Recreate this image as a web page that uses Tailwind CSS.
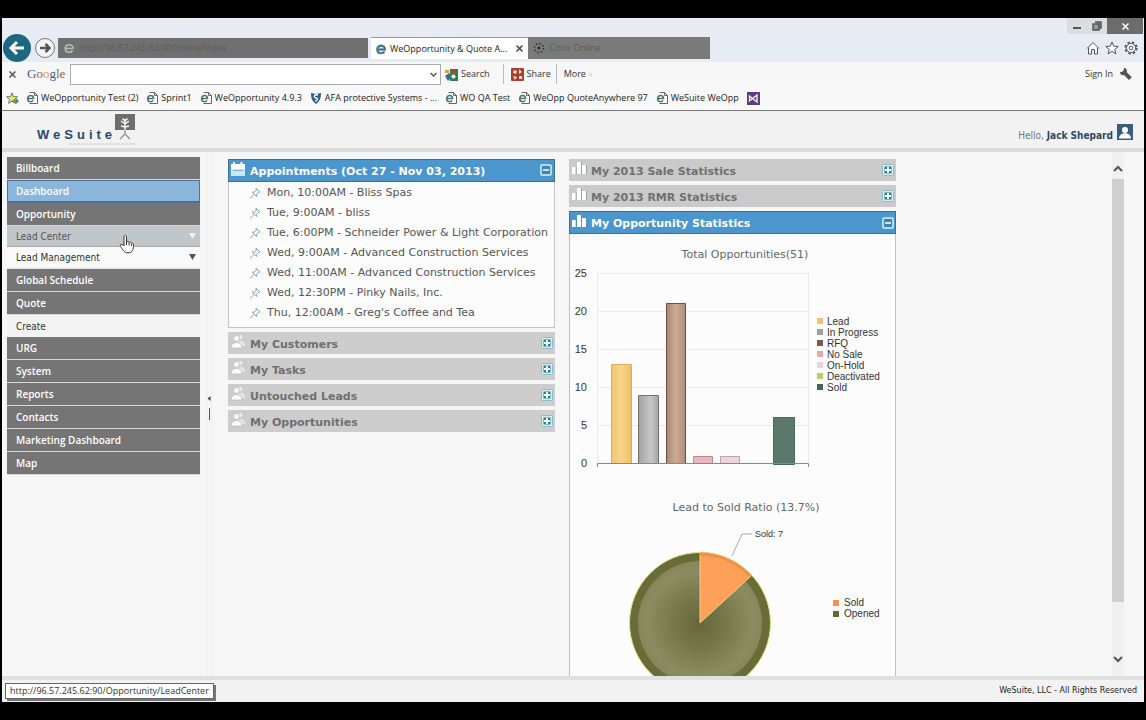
<!DOCTYPE html>
<html lang="en">
<head>
    <meta charset="UTF-8">
    <meta name="viewport" content="width=device-width, initial-scale=1.0">
    <title>WeOpportunity &amp; Quote Anywhere</title>
    <script src="https://cdn.jsdelivr.net/npm/@tailwindcss/browser@4"></script>
</head>
<body class="h-screen overflow-hidden bg-black">
    <!-- Shared icons -->
    <svg class="hidden">
        <symbol id="ie" viewBox="0 0 12 12"><path d="M3.500.5h5l3 3v8h-8" fill="#fff" stroke="#666"/><path d="M8.500.5v3h3" fill="none" stroke="#666"/><path d="M1.500 6.500h6c0-4-5.500-4-5.800 0-.2 3.800 4.300 4 5.300 1.700" fill="none" stroke="#4b7377" stroke-width="1.500"/></symbol>
        <symbol id="pin" viewBox="0 0 12 12"><path d="M7 1l4 4-1.500.3-2 2 .2 2.200-4.500-4.500 2.300.2 1.700-2zM5 7.500L1 11.300" fill="#fff" stroke="#84a9b5"/></symbol>
        <symbol id="people" viewBox="0 0 16 16"><circle cx="10.500" cy="4" r="3" fill="#e4e9e9" stroke="#b2bcbc" stroke-width=".7"/><path d="M7 13c0-7 8-7 8 0z" fill="#dfe6e6"/><circle cx="6.500" cy="5.500" r="3" fill="#f8fafa" stroke="#b2bcbc" stroke-width=".7"/><path d="M1 15c0-7.500 11-7.500 11 0z" fill="#fafcfc" stroke="#b2bcbc" stroke-width=".7"/></symbol>
        <symbol id="bars" viewBox="0 0 16 14"><path d="M1 6h4v7H1zM6 1h4v12H6zM11 4h4v9h-4z" fill="#fff"/><path d="M5 6v7M10.500 1v12M15.500 4v9" stroke="#5f8da3" stroke-width=".6"/></symbol>
        <symbol id="plus" viewBox="0 0 12 12"><rect x=".5" y=".5" width="11" height="11" rx="1" fill="#d6f1f6" stroke="#8abdca"/><path d="M2.500 2.500h7v7h-7z" fill="#2c7b90"/><path d="M6 3v6M3 6h6" stroke="#fff" stroke-width="2"/></symbol>
        <symbol id="minus" viewBox="0 0 12 12"><rect x="1" y="1" width="10" height="10" rx="1" fill="#3c86b0" stroke="#d9f3fa" stroke-width="1.500"/><path d="M3 6h6" stroke="#fff" stroke-width="1.500"/></symbol>
    </svg>

    <div class="flex flex-col h-full px-[2px] py-[18px]">
        <!-- Title bar -->
        <div class="flex justify-end h-4 bg-[#e9ecf2] pr-px">
            <button aria-label="Minimize" class="flex items-center justify-center w-5 bg-[#dcdddf]"><svg class="w-2 h-2" viewBox="0 0 8 8"><path d="M0 6h8" stroke="#555" stroke-width="2"/></svg></button>
            <button aria-label="Restore" class="flex items-center justify-center w-5 bg-[#dcdddf]"><svg class="w-[10px] h-[10px]" viewBox="0 0 10 10"><path d="M3 1h6v6H7M1 3h6v6H1z" fill="#999" stroke="#555" stroke-width="1.500"/></svg></button>
            <button aria-label="Close" class="flex items-center justify-center w-9 bg-[#6c6c6c]"><svg class="w-[7px] h-[7px]" viewBox="0 0 7 7"><path d="M.5.5l6 6m0-6l-6 6" stroke="#fff" stroke-width="1.500"/></svg></button>
        </div>

        <!-- Address bar and tabs -->
        <div class="flex items-center h-7 bg-[#e6ebf4] font-['Open_Sans',sans-serif] text-[9px] text-[#222]">
            <button aria-label="Back" class="w-7 h-7 shrink-0 ml-px"><svg viewBox="0 0 28 28"><circle cx="14" cy="14" r="14" fill="#1d6783"/><path d="M21 14H8.500M14 8l-6 6 6 6" fill="none" stroke="#fff" stroke-width="3"/></svg></button>
            <button aria-label="Forward" class="w-5 h-5 shrink-0 ml-1"><svg viewBox="0 0 20 20"><circle cx="10" cy="10" r="9.500" fill="#f3f5f8" stroke="#777"/><path d="M5 10h9M10.500 6l4 4-4 4" fill="none" stroke="#555" stroke-width="2.500"/></svg></button>
            <div class="flex items-center w-[310px] h-5 ml-[3px] pl-[5px] bg-[#707070]">
                <svg class="w-3 h-3 shrink-0" viewBox="0 0 12 12"><path d="M2 6.500h8c0-5-7.500-5-7.800 0-.2 4.500 5.500 4.800 7.300 2" fill="none" stroke="#aebfc4" stroke-width="1.500"/></svg>
                <input aria-label="Address" value="http://96.57.245.62:90/Home/Index" class="flex-1 min-w-0 ml-1 text-[#5c5c5c] outline-none">
            </div>
            <div class="flex items-center w-[157px] h-[22px] ml-[3px] pl-1 pr-[5px] bg-white border-t border-[#999]">
                <svg class="w-3 h-3 shrink-0" viewBox="0 0 12 12"><circle cx="6" cy="6" r="5" fill="#cfe0e6"/><path d="M2 6.500h8c0-5-7.500-5-7.800 0-.2 4.500 5.500 4.800 7.300 2" fill="none" stroke="#3f7285" stroke-width="1.800"/></svg>
                <span class="flex-1 min-w-0 ml-[3px] whitespace-nowrap">WeOpportunity &amp; Quote A...</span>
                <button aria-label="Close tab"><svg class="w-[7px] h-[7px]" viewBox="0 0 7 7"><path d="M.5.5l6 6m0-6l-6 6" stroke="#444" stroke-width="1.500"/></svg></button>
            </div>
            <div class="flex items-center w-[182px] h-[22px] pl-[5px] bg-[#7a7a7a] text-[#5d5d5d]">
                <svg class="w-3 h-3" viewBox="0 0 12 12"><circle cx="6" cy="6" r="4.500" fill="none" stroke="#333" stroke-width="1.500" stroke-dasharray="1.500 2"/><circle cx="6" cy="6" r="1.300" fill="#222"/></svg>
                <span class="ml-1">Citrix Online</span>
            </div>
            <div class="flex gap-[5px] ml-auto pr-[6px] text-[#555]">
                <button aria-label="Home"><svg class="w-[14px] h-[14px]" viewBox="0 0 14 14" fill="#fff" stroke="currentColor"><path d="M2.500 6.500v6.500h3V8.500h3V13h3V6.500M1 7.500l6-6 6 6"/></svg></button>
                <button aria-label="Favorites"><svg class="w-[14px] h-[14px]" viewBox="0 0 14 14" fill="#fff" stroke="currentColor"><path d="M7 1l1.700 4.200 4.500.3-3.500 2.900 1.200 4.400L7 10.400l-3.900 2.400 1.200-4.400L.8 5.500l4.500-.3z"/></svg></button>
                <button aria-label="Tools"><svg class="w-[14px] h-[14px]" viewBox="0 0 14 14" fill="none" stroke="currentColor"><circle cx="7" cy="7" r="5.700" stroke-width="1.800" stroke-dasharray="2.500 2"/><circle cx="7" cy="7" r="4.500" fill="#fff"/><circle cx="7" cy="7" r="1.800"/></svg></button>
            </div>
        </div>

        <!-- Google toolbar -->
        <div class="flex items-center h-6 bg-[#f7f7f8] font-['Open_Sans',sans-serif] text-[9px] text-[#333]">
            <button aria-label="Close toolbar" class="ml-[7px]"><svg class="w-[7px] h-[7px]" viewBox="0 0 7 7"><path d="M.5.5l6 6m0-6l-6 6" stroke="#555" stroke-width="1.500"/></svg></button>
            <span class="w-[43px] shrink-0 ml-[11px] font-['Liberation_Serif',serif] text-[13px]"><span class="text-[#3c5da8]">G</span><span class="text-[#b8503f]">o</span><span class="text-[#e0a23c]">o</span><span class="text-[#3c5da8]">g</span><span class="text-[#4e8a50]">l</span><span class="text-[#b8503f]">e</span></span>
            <div class="flex items-center w-[371px] h-[21px] bg-white border border-[#a9abb0]">
                <input aria-label="Search" class="flex-1 min-w-0 h-full px-1 outline-none">
                <svg class="w-[7px] h-[7px] mr-[3px]" viewBox="0 0 7 7"><path d="M.5 2l3 3 3-3" fill="none" stroke="#555" stroke-width="1.500"/></svg>
            </div>
            <button class="flex items-center gap-[3px] ml-1"><svg class="w-[13px] h-[13px]" viewBox="0 0 13 13"><path d="M5 1h8v12H5z" fill="#308044"/><path d="M0 2h4v3H0z" fill="#d2a23b"/><path d="M0 8l4-3 3 4-4 4z" fill="#366c9b"/><path d="M7 2h4v4H7z" fill="#b93e31"/><path d="M6 8l3-2 2 3-3 2z" fill="#eee"/></svg>Search</button>
            <button class="flex items-center gap-[3px] h-5 ml-[13px] pl-[7px] border-l border-[#bbb]"><svg class="w-[13px] h-[13px]" viewBox="0 0 13 13"><rect width="13" height="13" rx="1" fill="#a8402f"/><path d="M3 2l3 1-1 3-3-1zM8 1l3 3-3 2zM2 8l4 1-2 3zM8 8h3v3H8z" fill="#eee2dc"/></svg>Share</button>
            <button class="h-5 ml-[5px] pl-[7px] border-l border-[#bbb]">More <span class="text-[#ccc]">»</span></button>
            <a href="#" class="ml-auto mr-[7px]">Sign In</a>
            <svg class="w-3 h-3 mr-3" viewBox="0 0 12 12"><path d="M4 0l-.5 2.500L2.300 3.700 0 4c0 2.500 2 3.700 4 3l5 5 2.800-2.800-5-5C7.500 2 6 0 4 0z" fill="#555"/></svg>
        </div>

        <!-- Favorites bar -->
        <div class="flex items-center h-[25px] pl-1 bg-[#f8f8f8] border-b border-[#777] font-['Open_Sans',sans-serif] text-[9px] text-[#222] whitespace-nowrap">
            <svg class="w-[13px] h-[13px] mr-[7px] shrink-0" viewBox="0 0 13 13"><path d="M6 .8l1.500 3.700 4 .3-3 2.600.9 4L6 9.200l-3.400 2.200.9-4L.5 4.800l4-.3z" fill="#ece567" stroke="#777"/><path d="M6 9h6M9.500 6.500L12 9l-2.500 2.500" fill="none" stroke="#5a8a4c" stroke-width="1.500"/></svg>
            <nav class="flex items-center gap-2">
                <a href="#" class="flex items-center gap-[3px]"><svg class="w-3 h-3"><use href="#ie"/></svg>WeOpportunity Test (2)</a>
                <a href="#" class="flex items-center gap-[3px]"><svg class="w-3 h-3"><use href="#ie"/></svg>Sprint1</a>
                <a href="#" class="flex items-center gap-[3px]"><svg class="w-3 h-3"><use href="#ie"/></svg>WeOpportunity 4.9.3</a>
                <a href="#" class="flex items-center gap-[3px]"><svg class="w-3 h-3" viewBox="0 0 12 12"><path d="M1 1l5 1 5-1c0 5-1 8-5 11C2 9 1 6 1 1z" fill="#315a93"/><path d="M8 3C3 2 4 6 6 6s2 3-1 3" fill="none" stroke="#fff" stroke-width="1.500"/></svg>AFA protective Systems - ...</a>
                <a href="#" class="flex items-center gap-[3px]"><svg class="w-3 h-3"><use href="#ie"/></svg>WO QA Test</a>
                <a href="#" class="flex items-center gap-[3px]"><svg class="w-3 h-3"><use href="#ie"/></svg>WeOpp QuoteAnywhere 97</a>
                <a href="#" class="flex items-center gap-[3px]"><svg class="w-3 h-3"><use href="#ie"/></svg>WeSuite WeOpp</a>
                <a href="#" aria-label="Visual Studio"><svg class="w-[13px] h-[13px]" viewBox="0 0 13 13"><path d="M0 0h13v13H0z" fill="#5d3c80"/><path d="M2.500 4v5L10 3v7z" fill="none" stroke="#fff" stroke-width="1.300"/></svg></a>
            </nav>
        </div>

        <!-- Site header -->
        <header class="flex items-center justify-between h-[41px] pl-[35px] pr-[11px] bg-[#f2f2f2] border-b-4 border-[#dcdcdc]">
            <div class="relative w-[100px] h-full">
                <span class="absolute left-0 top-[17px] font-['Liberation_Sans',sans-serif] text-[13px] leading-[14px] font-black tracking-[4px] text-[#29496a]">WeSuite</span>
                <svg class="absolute left-[78px] top-[3px] w-5 h-[26px]" viewBox="0 0 20 26"><path d="M0 0h20v16H0z" fill="#6d6d6a"/><path d="M10 5v13M10 10L6 7M10 10l4-3M10 13l-4-1M10 13l4-1M10 7L7.500 4.500M10 7l2.500-2.500" stroke="#f4f4f4" stroke-width="1.500"/><path d="M10 16v5M10 20l-5 5M10 20l5 5" stroke="#999" stroke-width="1.500"/></svg>
                <svg class="absolute left-8 top-8 w-[66px] h-[2px]" viewBox="0 0 66 2"><path d="M0 1h66" stroke="#c8c8c8" stroke-dasharray="3 1"/></svg>
            </div>
            <div class="flex items-center gap-1 pt-3 font-['DejaVu_Sans_Condensed','DejaVu_Sans',sans-serif] text-[10px] text-[#777]">
                <span>Hello, <a href="#" class="text-[#2b4a66] font-bold">Jack Shepard</a></span>
                <svg class="w-4 h-4 mb-2" viewBox="0 0 16 16"><path d="M0 0h16v16H0z" fill="#375f7c"/><circle cx="8" cy="6" r="3" fill="#fff"/><path d="M2 14.500c0-7 12-7 12 0z" fill="#fff"/></svg>
            </div>
        </header>

        <div class="flex flex-1 min-h-0 bg-[#f6f6f6]">
            <!-- Sidebar -->
            <nav class="w-[198px] shrink-0 pl-[5px] pt-[5px] font-['Open_Sans',sans-serif] text-[10px] font-semibold text-white">
                <a href="#" class="flex items-center h-[23px] px-[9px] bg-[#757575] border-b border-[#d8d8d8]">Billboard</a>
                <a href="#" class="flex items-center h-[23px] px-2 bg-[#8ab6dc] border border-b-2 border-[#526f8d]">Dashboard</a>
                <a href="#" class="flex items-center h-[23px] px-[9px] bg-[#757575] border-b border-[#d8d8d8]">Opportunity</a>
                <a href="#" class="flex items-center justify-between h-[21px] pl-[9px] pr-1 bg-[#c1c6ca] border-b border-[#aaa] font-['DejaVu_Sans_Condensed','DejaVu_Sans',sans-serif] font-normal text-[#555]">Lead Center <svg class="w-[7px] h-[6px]" viewBox="0 0 7 6"><path d="M0 0h7L3.500 6z" fill="#f2f2f2"/></svg></a>
                <a href="#" class="flex items-center justify-between h-[22px] pl-[9px] pr-1 bg-[#fafafa] border-b-2 border-[#ececec] font-['DejaVu_Sans_Condensed','DejaVu_Sans',sans-serif] font-normal text-[#333]">Lead Management <svg class="w-[7px] h-[6px]" viewBox="0 0 7 6"><path d="M0 0h7L3.500 6z" fill="#555"/></svg></a>
                <a href="#" class="flex items-center h-[23px] px-[9px] bg-[#757575] border-b border-[#d8d8d8]">Global Schedule</a>
                <a href="#" class="flex items-center h-[23px] px-[9px] bg-[#757575] border-b border-[#d8d8d8]">Quote</a>
                <a href="#" class="flex items-center h-[22px] px-[9px] bg-[#f3f3f3] font-['DejaVu_Sans_Condensed','DejaVu_Sans',sans-serif] font-normal text-[#333]">Create</a>
                <a href="#" class="flex items-center h-[23px] px-[9px] bg-[#757575] border-b border-[#d8d8d8]">URG</a>
                <a href="#" class="flex items-center h-[23px] px-[9px] bg-[#757575] border-b border-[#d8d8d8]">System</a>
                <a href="#" class="flex items-center h-[23px] px-[9px] bg-[#757575] border-b border-[#d8d8d8]">Reports</a>
                <a href="#" class="flex items-center h-[23px] px-[9px] bg-[#757575] border-b border-[#d8d8d8]">Contacts</a>
                <a href="#" class="flex items-center h-[23px] px-[9px] bg-[#757575] border-b border-[#d8d8d8]">Marketing Dashboard</a>
                <a href="#" class="flex items-center h-[23px] px-[9px] bg-[#757575] border-b border-[#d8d8d8]">Map</a>
            </nav>

            <!-- Splitter -->
            <div class="flex flex-col items-center justify-center w-[6px] ml-[6px] pb-3 border-x border-[#ececec]">
                <svg class="w-1 h-6" viewBox="0 0 4 24"><path d="M3.500 0v5L.5 2.500z" fill="#444"/><path d="M2.500 12v12" stroke="#555"/></svg>
            </div>

            <!-- Dashboard columns -->
            <main class="flex flex-1 min-w-0 gap-[14px] pl-4 pt-[7px] overflow-hidden font-['DejaVu_Sans',Verdana,sans-serif] text-[11px] text-[#555]">
                <div class="flex flex-col gap-1 flex-1 max-w-[327px]">
                    <section class="border border-t-0 border-[#c4c4c4] bg-[#fcfcfc]">
                        <h2 class="flex items-center h-[23px] -mx-px px-[2px] bg-[#4a96cd] border border-[#3c708f] font-bold text-white">
                            <svg class="w-[14px] h-4 mb-1" viewBox="0 0 14 16"><path d="M0 4h14v11H0z" fill="#c9eaf3"/><path d="M0 4h14v3H0zM3 1v5M10.500 1v5" fill="#fff" stroke="#fff" stroke-width="2"/><path d="M2 9.500h10" stroke="#75b2cf"/></svg>
                            <span class="flex-1 ml-[5px] pt-1">Appointments (Oct 27 - Nov 03, 2013)</span>
                            <button aria-label="Collapse" class="pb-[2px]"><svg class="w-3 h-3"><use href="#minus"/></svg></button>
                        </h2>
                        <ul class="pl-5 pt-px pb-1 leading-5">
                            <li class="flex items-center gap-[6px]"><svg class="w-3 h-3"><use href="#pin"/></svg>Mon, 10:00AM - Bliss Spas</li>
                            <li class="flex items-center gap-[6px]"><svg class="w-3 h-3"><use href="#pin"/></svg>Tue, 9:00AM - bliss</li>
                            <li class="flex items-center gap-[6px]"><svg class="w-3 h-3"><use href="#pin"/></svg>Tue, 6:00PM - Schneider Power &amp; Light Corporation</li>
                            <li class="flex items-center gap-[6px]"><svg class="w-3 h-3"><use href="#pin"/></svg>Wed, 9:00AM - Advanced Construction Services</li>
                            <li class="flex items-center gap-[6px]"><svg class="w-3 h-3"><use href="#pin"/></svg>Wed, 11:00AM - Advanced Construction Services</li>
                            <li class="flex items-center gap-[6px]"><svg class="w-3 h-3"><use href="#pin"/></svg>Wed, 12:30PM - Pinky Nails, Inc.</li>
                            <li class="flex items-center gap-[6px]"><svg class="w-3 h-3"><use href="#pin"/></svg>Thu, 12:00AM - Greg's Coffee and Tea</li>
                        </ul>
                    </section>
                    <h2 class="flex items-center h-[22px] px-[2px] bg-[#cdcdcd] font-bold text-[#707070]">
                        <svg class="w-4 h-4 mb-1"><use href="#people"/></svg><span class="flex-1 ml-1 pt-1">My Customers</span>
                        <button aria-label="Expand"><svg class="w-3 h-3"><use href="#plus"/></svg></button>
                    </h2>
                    <h2 class="flex items-center h-[22px] px-[2px] bg-[#cdcdcd] font-bold text-[#707070]">
                        <svg class="w-4 h-4 mb-1"><use href="#people"/></svg><span class="flex-1 ml-1 pt-1">My Tasks</span>
                        <button aria-label="Expand"><svg class="w-3 h-3"><use href="#plus"/></svg></button>
                    </h2>
                    <h2 class="flex items-center h-[22px] px-[2px] bg-[#cdcdcd] font-bold text-[#707070]">
                        <svg class="w-4 h-4 mb-1"><use href="#people"/></svg><span class="flex-1 ml-1 pt-1">Untouched Leads</span>
                        <button aria-label="Expand"><svg class="w-3 h-3"><use href="#plus"/></svg></button>
                    </h2>
                    <h2 class="flex items-center h-[22px] px-[2px] bg-[#cdcdcd] font-bold text-[#707070]">
                        <svg class="w-4 h-4 mb-1"><use href="#people"/></svg><span class="flex-1 ml-1 pt-1">My Opportunities</span>
                        <button aria-label="Expand"><svg class="w-3 h-3"><use href="#plus"/></svg></button>
                    </h2>
                </div>

                <div class="flex flex-col gap-1 flex-1 max-w-[327px]">
                    <h2 class="flex items-center h-[22px] shrink-0 px-[2px] bg-[#cacaca] font-bold text-[#707070]">
                        <svg class="w-4 h-[14px] mb-1"><use href="#bars"/></svg><span class="flex-1 ml-1 pt-1">My 2013 Sale Statistics</span>
                        <button aria-label="Expand"><svg class="w-3 h-3"><use href="#plus"/></svg></button>
                    </h2>
                    <h2 class="flex items-center h-[22px] shrink-0 px-[2px] bg-[#cacaca] font-bold text-[#707070]">
                        <svg class="w-4 h-[14px] mb-1"><use href="#bars"/></svg><span class="flex-1 ml-1 pt-1">My 2013 RMR Statistics</span>
                        <button aria-label="Expand"><svg class="w-3 h-3"><use href="#plus"/></svg></button>
                    </h2>
                    <section class="border border-t-0 border-[#c0c0c0] bg-[#fcfcfc]">
                        <h2 class="flex items-center h-[23px] -mx-px px-px bg-[#4a96cd] border border-[#3c708f] font-bold text-white">
                            <svg class="w-4 h-[14px] mb-1"><use href="#bars"/></svg><span class="flex-1 ml-1 pt-1">My Opportunity Statistics</span>
                            <button aria-label="Collapse"><svg class="w-3 h-3"><use href="#minus"/></svg></button>
                        </h2>
                        <svg class="w-full" viewBox="0 0 325 480" fill="#555" font-family="Liberation Sans, sans-serif" font-size="10">
                            <defs>
                                <linearGradient id="lead"><stop stop-color="#f2c471"/><stop offset=".5" stop-color="#f7d48c"/><stop offset="1" stop-color="#efbf6a"/></linearGradient>
                                <linearGradient id="prog"><stop stop-color="#a2a2a2"/><stop offset=".6" stop-color="#c6c6c6"/><stop offset="1" stop-color="#a6a6a6"/></linearGradient>
                                <linearGradient id="rfq"><stop stop-color="#a98673"/><stop offset=".5" stop-color="#ccab93"/><stop offset="1" stop-color="#b18c76"/></linearGradient>
                                <radialGradient id="opened"><stop stop-color="#66673c"/><stop offset=".4" stop-color="#757649"/><stop offset=".85" stop-color="#8b8c61"/><stop offset="1" stop-color="#858659"/></radialGradient>
                            </defs>
                            <!-- Total opportunities -->
                            <text x="175" y="24" text-anchor="middle" font-family="DejaVu Sans, Verdana, sans-serif" font-size="11" fill="#666">Total Opportunities(51)</text>
                            <path d="M27.500 39.500h211M27.500 77.500h211M27.500 115.500h211M27.500 153.500h211M27.500 191.500h211M27.500 39v190M238.500 39v190" stroke="#ebebeb" fill="none"/>
                            <g font-size="11" text-anchor="end" fill="#333">
                                <text x="17" y="43">25</text><text x="17" y="81">20</text><text x="17" y="119">15</text><text x="17" y="157">10</text><text x="17" y="195">5</text><text x="17" y="233">0</text>
                            </g>
                            <path d="M41.500 130.500h20v99h-20z" fill="url(#lead)" stroke="#d8ae65"/>
                            <path d="M68.500 161.500h20v68h-20z" fill="url(#prog)" stroke="#6f6f6f"/>
                            <path d="M96.500 69.500h19v160h-19z" fill="url(#rfq)" stroke="#6b4f42"/>
                            <path d="M123.500 222.500h19v7h-19z" fill="#e9b8c0" stroke="#b58b92"/>
                            <path d="M150.500 222.500h19v7h-19z" fill="#ecd5da" stroke="#bba5aa"/>
                            <path d="M203.500 183.500h21v47h-21z" fill="#5c786d" stroke="#446c5e"/>
                            <path d="M27.500 233v-3.500h211v3.500" fill="none" stroke="#888"/>
                            <g fill="#333">
                                <path d="M247 84h6v6h-6z" fill="#efc372"/><text x="257" y="91">Lead</text>
                                <path d="M247 95h6v6h-6z" fill="#a0a0a0"/><text x="257" y="102">In Progress</text>
                                <path d="M247 106h6v6h-6z" fill="#7b5c4e"/><text x="257" y="113">RFQ</text>
                                <path d="M247 117h6v6h-6z" fill="#dfabb3"/><text x="257" y="124">No Sale</text>
                                <path d="M247 128h6v6h-6z" fill="#ecd5da"/><text x="257" y="135">On-Hold</text>
                                <path d="M247 139h6v6h-6z" fill="#b2d45c"/><text x="257" y="146">Deactivated</text>
                                <path d="M247 150h6v6h-6z" fill="#3f6b5d"/><text x="257" y="157">Sold</text>
                            </g>
                            <!-- Lead to sold ratio -->
                            <text x="176" y="277" text-anchor="middle" font-family="DejaVu Sans, Verdana, sans-serif" font-size="11" fill="#666">Lead to Sold Ratio (13.7%)</text>
                            <circle cx="130" cy="389" r="70.500" fill="#6a6c38" stroke="#e4e38a"/>
                            <circle cx="130" cy="389" r="62" fill="url(#opened)"/>
                            <path d="M130 389V318a71 71 0 0 1 51 24z" fill="#fca05a" stroke="#eed08a"/>
                            <path d="M130 320a69 69 0 0 1 50 22" fill="none" stroke="#f58f42" stroke-width="3"/>
                            <path d="M162 322l10-22h10" fill="none" stroke="#aaa"/>
                            <g fill="#333">
                                <text x="185" y="303" font-size="9">Sold: 7</text>
                                <path d="M263 366h6v6h-6z" fill="#f4934d"/><text x="274" y="372">Sold</text>
                                <path d="M263 377h6v6h-6z" fill="#65682f"/><text x="274" y="383">Opened</text>
                            </g>
                        </svg>
                    </section>
                </div>
            </main>

            <!-- Page scrollbar -->
            <div class="flex flex-col items-center w-3 mr-5 pt-3 pb-3 bg-[#f0f0f0]">
                <svg class="w-[10px] h-[10px]" viewBox="0 0 10 10"><path d="M1 7l4-4 4 4" fill="none" stroke="#555" stroke-width="2"/></svg>
                <div class="flex-1 w-full py-[5px]"><div class="w-full h-9/10 bg-[#cfcfcf]"></div></div>
                <svg class="w-[10px] h-[10px]" viewBox="0 0 10 10"><path d="M1 3l4 4 4-4" fill="none" stroke="#555" stroke-width="2"/></svg>
            </div>
        </div>

        <footer class="flex items-center justify-between h-[26px] pl-[3px] pr-[7px] bg-[#f2f2f2] border-t-4 border-[#e0e0e0]">
            <div class="px-1 bg-white border border-[#666] shadow-[2px_2px_0_#777] font-['Open_Sans',sans-serif] text-[9px] leading-[14px] text-[#333]">http://96.57.245.62:90/Opportunity/LeadCenter</div>
            <div class="font-['DejaVu_Sans',Verdana,sans-serif] text-[8px] text-[#222]">WeSuite, LLC - All Rights Reserved</div>
        </footer>
    </div>

    <!-- Mouse pointer -->
    <svg class="absolute left-[119px] top-[234px] w-4 h-5" viewBox="0 0 16 20"><path d="M5 12V3c0-2 2.500-2 2.500 0v5c.5-1 2.300-.8 2.500.5.800-.8 2.200-.4 2.400.8 1-.5 2.100 0 2.100 1.500 0 4-.5 8-5.500 8-4 0-5.500-3.500-7.500-6.500-1-1.800 1-3 3.500-.3z" fill="#fff" stroke="#333"/><path d="M7.500 8v3M10 9v2.500M12.400 10v2" stroke="#333"/></svg>
</body>
</html>
